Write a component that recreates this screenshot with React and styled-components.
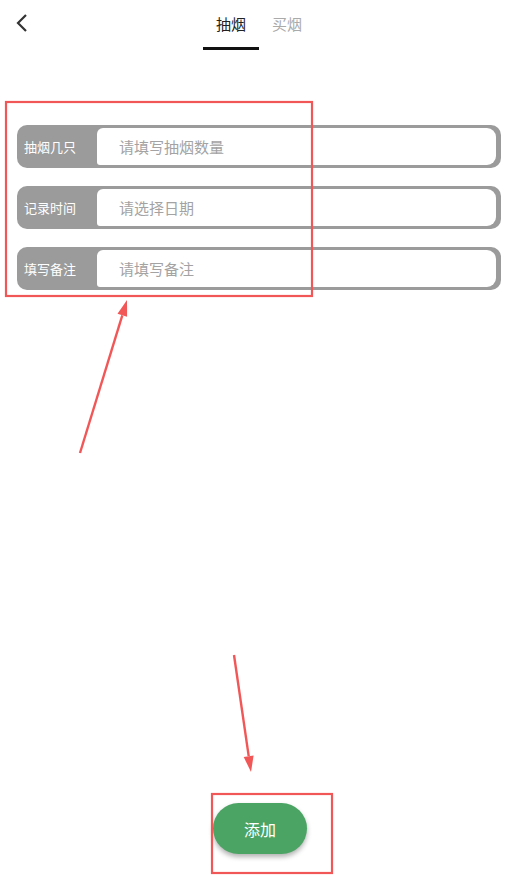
import React from 'react';
import styled, { createGlobalStyle } from 'styled-components';

const GlobalStyle = createGlobalStyle`
  html, body {
    margin: 0;
    padding: 0;
    background: #ffffff;
    font-family: "Noto Sans CJK SC", "Noto Sans", sans-serif;
  }
`

const rows = [
  { label: '抽烟几只', placeholder: '请填写抽烟数量' },
  { label: '记录时间', placeholder: '请选择日期' },
  { label: '填写备注', placeholder: '请填写备注' },
];

const App = () => {
  return (
    <Page>
      <GlobalStyle />
      <Header>
        <BackButton>
          <svg width="14" height="20" viewBox="0 0 14 20">
            <polyline points="11,2 3,10 11,18" fill="none" stroke="#333" strokeWidth="2.2" />
          </svg>
        </BackButton>
        <Tabs>
          <Tab active>抽烟</Tab>
          <Tab>买烟</Tab>
        </Tabs>
      </Header>

      <Form>
        {rows.map((r) => (
          <Field key={r.label}>
            <Label>{r.label}</Label>
            <InputBox placeholder={r.placeholder} readOnly />
          </Field>
        ))}
      </Form>

      <AddButton>添加</AddButton>

      <Overlay width="518" height="889" viewBox="0 0 518 889">
        <rect x="6" y="102" width="306" height="194" fill="none" stroke="#f25757" strokeWidth="2.2" />
        <rect x="212" y="794" width="120" height="79" fill="none" stroke="#f25757" strokeWidth="2.2" />
        <line x1="80" y1="453" x2="122.3" y2="315.3" stroke="#f25757" strokeWidth="2.4" />
        <polygon points="127,300 127.1,316.8 117.5,313.8" fill="#f25757" />
        <line x1="234" y1="655" x2="248.7" y2="756.2" stroke="#f25757" strokeWidth="2.4" />
        <polygon points="251,772 253.6,755.5 243.7,756.9" fill="#f25757" />
      </Overlay>
    </Page>
  )
}

const Page = styled.div`
  position: relative;
  width: 518px;
  min-height: 889px;
  display: flex;
  flex-direction: column;
  box-sizing: border-box;
`
const Header = styled.header`
  position: relative;
  height: 50px;
  display: flex;
  justify-content: center;
`
const BackButton = styled.div`
  position: absolute;
  left: 15px;
  top: 13px;
  display: flex;
`
const Tabs = styled.div`
  display: flex;
`
const Tab = styled.div`
  width: 56px;
  height: 50px;
  box-sizing: border-box;
  display: flex;
  justify-content: center;
  padding-top: 13px;
  font-size: 15px;
  line-height: 22px;
  color: ${(p) => (p.active ? '#222' : '#aaa')};
  border-bottom: 3px solid ${(p) => (p.active ? '#111' : 'transparent')};
`
const Form = styled.div`
  margin: 75px 17px 0 17px;
  display: flex;
  flex-direction: column;
  gap: 18px;
`
const Field = styled.div`
  height: 43px;
  box-sizing: border-box;
  display: flex;
  background: #9b9b9b;
  border-radius: 10px;
  padding: 3px 5px 3px 0;
`
const Label = styled.div`
  width: 80px;
  flex-shrink: 0;
  box-sizing: border-box;
  padding-left: 7px;
  display: flex;
  align-items: center;
  color: #fff;
  font-size: 13px;
`
const InputBox = styled.input`
  flex: 1;
  min-width: 0;
  border: none;
  outline: none;
  background: #fff;
  border-radius: 6px 9px 9px 3px;
  padding: 0 0 0 22px;
  font-family: "Noto Sans CJK SC", "Noto Sans", sans-serif;
  font-size: 15px;
  color: #333;
  &::placeholder {
    color: #a3a3a3;
  }
`
const AddButton = styled.button`
  align-self: center;
  margin: auto 0 35px 2px;
  width: 94px;
  height: 51px;
  border: none;
  border-radius: 26px;
  background: #4ba464;
  color: #fff;
  font-family: "Noto Sans CJK SC", "Noto Sans", sans-serif;
  font-size: 16px;
  box-shadow: 0 3px 5px rgba(0, 0, 0, 0.3);
`
const Overlay = styled.svg`
  position: absolute;
  left: 0;
  top: 0;
  pointer-events: none;
`

export default App;
